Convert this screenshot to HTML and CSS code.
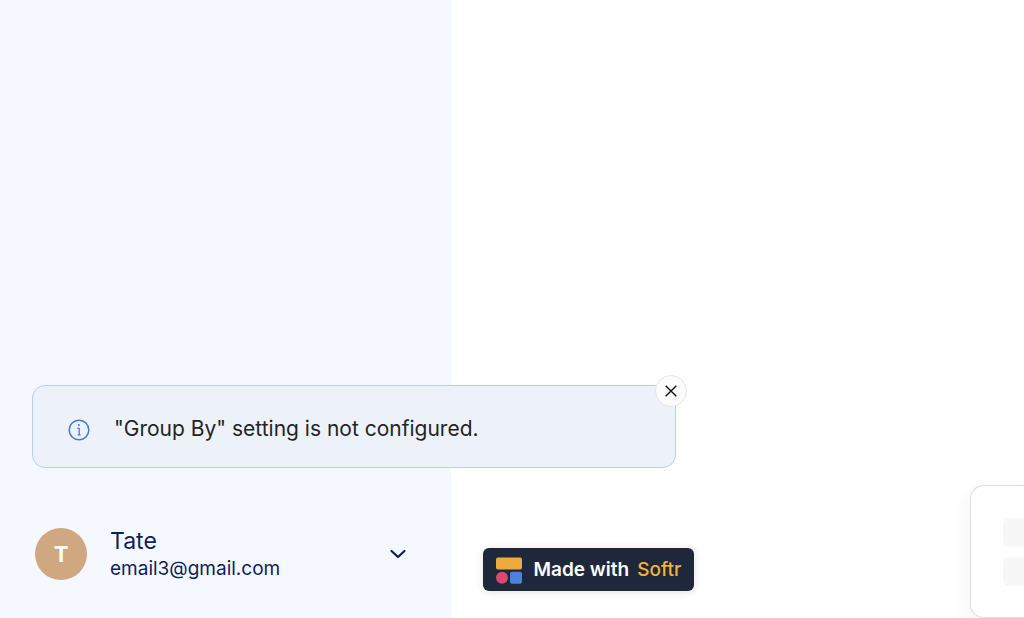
FILE: index.html
```html
<!DOCTYPE html>
<html lang="en">
<head>
<meta charset="utf-8">
<meta name="viewport" content="width=device-width, initial-scale=1">
<title>Workspace</title>
<link rel="stylesheet" href="styles.css">
</head>
<body>
<div class="app">
  <aside class="sidebar">
    <button class="account" type="button">
      <span class="avatar">T</span>
      <span class="identity">
        <span class="name">Tate</span>
        <span class="email">email3@gmail.com</span>
      </span>
      <svg class="chevron" viewBox="0 0 18 12" aria-hidden="true"><path d="M2.500 3 9 9l6.500-6"/></svg>
    </button>
  </aside>
  <main class="content">
    <a class="badge" href="#">
      <svg class="badge-logo" viewBox="0 0 26 27" aria-hidden="true">
        <rect y="0.500" width="26" height="12" rx="2" fill="#eca93c"/>
        <circle cx="6" cy="20.800" r="6" fill="#d94a70"/>
        <rect x="14" y="14.800" width="12" height="12" rx="2" fill="#4c82dc"/>
      </svg>
      <span>Made with</span>
      <span class="brand">Softr</span>
    </a>
    <section class="card" aria-label="Loading">
      <div class="skeleton"></div>
      <div class="skeleton"></div>
    </section>
  </main>
</div>
<div class="toast" role="status">
  <svg class="info" viewBox="0 0 22 22" aria-hidden="true">
    <circle cx="11" cy="11" r="9.800" stroke-width="1.500"/>
    <path d="M9.300 9.300h1.900v6.500M9.800 15.800h2.800" stroke-width="1.200"/>
    <circle class="info-dot" cx="10.900" cy="6" r="1"/>
  </svg>
  <p class="message">"Group By" setting is not configured.</p>
  <button class="close" type="button" aria-label="Close">
    <svg viewBox="0 0 12 12" aria-hidden="true"><path d="m.7.700 10.600 10.600M11.300.700.700 11.300"/></svg>
  </button>
</div>
</body>
</html>
```
FILE: styles.css
```css
* {
  box-sizing: border-box;
}

body {
  margin: 0;
  background: #fff;
  font-family: Inter, "Liberation Sans", sans-serif;
}

button {
  font: inherit;
  cursor: pointer;
}

.app {
  display: grid;
  grid-template-columns: 44fr 56fr;
  min-height: 100vh;
}

.sidebar {
  display: flex;
  flex-direction: column;
  justify-content: flex-end;
  padding: 36px 36px 36px 35px;
  background: #f5f8ff;
}

.account {
  display: flex;
  align-items: center;
  width: 100%;
  padding: 0 8px 0 0;
  border: 0;
  background: none;
  color: #0f1e5c;
  text-align: left;
}

.avatar {
  display: grid;
  place-items: center;
  flex: none;
  width: 52px;
  height: 52px;
  margin-right: 23px;
  border-radius: 50%;
  background: #cfa882;
  color: #fff;
  font-size: 22px;
  font-weight: 700;
}

.identity {
  display: flex;
  flex: 1;
  flex-direction: column;
}

.name {
  font-size: 23px;
  line-height: 30px;
}

.email {
  font-size: 19px;
  line-height: 26px;
}

.chevron {
  width: 18px;
  height: 12px;
  fill: none;
  stroke: #0f1e5c;
  stroke-width: 2.2;
  stroke-linecap: round;
  stroke-linejoin: round;
}

.content {
  display: flex;
  align-items: flex-end;
  justify-content: space-between;
  padding-left: 32px;
  overflow: hidden;
}

.badge {
  display: flex;
  align-items: center;
  height: 43px;
  margin-bottom: 27px;
  padding: 0 13px;
  border-radius: 6px;
  background: #1f283b;
  box-shadow: 0 1px 8px rgba(0, 0, 0, 0.12);
  color: #fff;
  font-size: 19px;
  font-weight: 600;
  text-decoration: none;
  white-space: nowrap;
}

.badge-logo {
  width: 26px;
  height: 27px;
  margin: 2px 12px 0 0;
}

.brand {
  margin-left: 8px;
  color: #f4b23e;
  font-weight: 500;
}

.card {
  display: grid;
  gap: 10px;
  width: 54px;
  padding: 32px 0 31px 32px;
  border: 1px solid #dedede;
  border-right: 0;
  border-radius: 14px 0 0 14px;
  background: #fff;
  box-shadow: 0 8px 24px rgba(0, 0, 0, 0.06);
}

.skeleton {
  height: 29px;
  border-radius: 6px 0 0 6px;
  background: #f7f7f7;
}

.toast {
  position: fixed;
  bottom: 150px;
  left: 32px;
  display: flex;
  align-items: center;
  gap: 24px;
  width: min(644px, calc(100% - 64px));
  min-height: 83px;
  padding: 24px 35px;
  border: 1px solid #b9cdf0;
  border-radius: 13px;
  background: #edf2fa;
}

.info {
  flex: none;
  width: 22px;
  height: 22px;
  margin-top: 6px;
  fill: none;
  stroke: #4478d2;
}

.info-dot {
  fill: #4478d2;
  stroke: none;
}

.message {
  margin: 5px 0 0;
  color: #242424;
  font-size: 21px;
  line-height: 28px;
}

.close {
  position: absolute;
  top: -11px;
  right: -12px;
  display: grid;
  place-items: center;
  width: 32px;
  height: 32px;
  padding: 0;
  border: 1px solid #e6e6e6;
  border-radius: 50%;
  background: #fcfcfc;
}

.close svg {
  width: 12px;
  height: 12px;
  fill: none;
  stroke: #111;
  stroke-width: 1.4;
}
```
